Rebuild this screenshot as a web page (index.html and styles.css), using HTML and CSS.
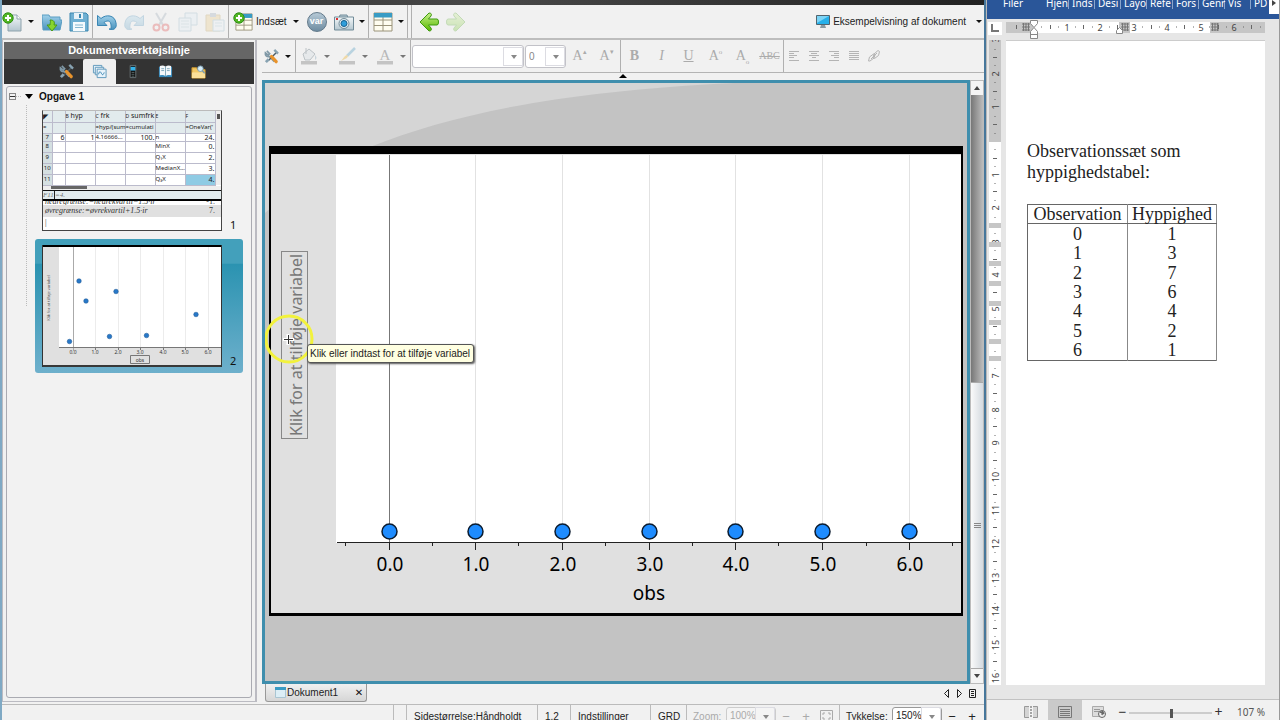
FILE: index.html
```html
<!DOCTYPE html>
<html lang="da">
<head>
<meta charset="utf-8">
<title>Dokument1</title>
<link rel="stylesheet" href="styles.css">
</head>
<body>
<svg class="defs" aria-hidden="true">
  <defs>
    <linearGradient id="gBlue" x1="0" y1="0" x2="0" y2="1"><stop offset="0" stop-color="#9fd0ea"/><stop offset="1" stop-color="#4a93bd"/></linearGradient>
    <linearGradient id="gGreen" x1="0" y1="0" x2="0" y2="1"><stop offset="0" stop-color="#c6f08a"/><stop offset="1" stop-color="#58b800"/></linearGradient>
    <linearGradient id="gGrey" x1="0" y1="0" x2="0" y2="1"><stop offset="0" stop-color="#f4f8fa"/><stop offset="1" stop-color="#b4c6cf"/></linearGradient>
  </defs>
  <symbol id="plus" viewBox="0 0 12 12"><circle cx="6" cy="6" r="5.2" fill="#52b623" stroke="#2e8d16"/><path d="M6 3v6M3 6h6" stroke="#fff" stroke-width="2"/></symbol>
  <symbol id="undo" viewBox="0 0 20 20"><path d="M0.500 3.500v10h9.500L7 10.500c4-3 8-2 7 6.500h-2c6 2 8-2 7-6C18 3 9 2 4 6.500z" fill="url(#gBlue)" stroke="#3a86b4"/></symbol>
  <symbol id="arrow" viewBox="0 0 20 20"><path d="M1 10 10 1c2 0 3 1 2 3L9.500 7H18q1.500 0 1.500 3T18 13H9.500l2.500 3c1 2 0 3-2 3z" fill="url(#gGreen)" stroke="#3f9a10"/></symbol>
  <symbol id="wrench" viewBox="0 0 16 16"><path d="M3 2l3 3-1.500 1.500L1.500 4C1 7 3 8.500 5.500 8L11 13.500" fill="none" stroke="#7f98a6" stroke-width="1.800"/><path d="M14 3l-9 9" stroke="#4e5d66" stroke-width="1.500"/><path d="M11 1l4 4" stroke="#88a3b2" stroke-width="2.500"/><path d="M8 8l5 5.500" stroke="#e8932c" stroke-width="3.500" stroke-linecap="round"/><path d="M5 11l-3 3" stroke="#88a3b2" stroke-width="3"/></symbol>
  <symbol id="table" viewBox="0 0 20 20"><path d="M1 1h18v18H1z" fill="#fffdf0" stroke="#9a937a"/><path d="M1 8h18M1 13.500h18M10 5v14" stroke="#9a937a"/><path d="M1 1h18v4.500H1z" fill="#389bc4"/></symbol>
</svg>

<div class="desktop">
<main class="app">
  <div class="titlebar"></div>

  <div class="toolbar">
    <button class="tool new menu" aria-label="Ny"><svg viewBox="0 0 20 20"><path d="M6 3h9l4 4v12H6z" fill="url(#gGrey)" stroke="#8fa3ad"/><path d="M15 3v4h4" fill="#fff" stroke="#8fa3ad"/><use href="#plus" x="0" y="0" width="12" height="12"/></svg></button>
    <button class="tool" aria-label="Åbn"><svg viewBox="0 0 20 20"><path d="M0 3h7l1 2h10v3h2l-2 10H1z" fill="url(#gBlue)" stroke="#5b9dc2"/><path d="M8 8c4 0 5 2 4 5h3l-5 6-5-6h3c0-2 1-3 0-5z" fill="#87d52f" stroke="#4a9a17"/></svg></button>
    <button class="tool" aria-label="Gem"><svg viewBox="0 0 20 20"><path d="M1 1h16l2 2v16H1z" fill="#6eafd2" stroke="#3b87b0"/><path d="M5 1h9v6H5z" fill="#e7f2f8"/><path d="M11 2v4" stroke="#3b87b0" stroke-width="2"/><path d="M4 10h12v9H4z" fill="#f4fafd"/><path d="M6 13h8M6 15.500h8" stroke="#86b7d0"/></svg></button>
    <span class="sep"></span>
    <button class="tool" aria-label="Fortryd"><svg><use href="#undo"/></svg></button>
    <button class="tool" aria-label="Annuller fortryd" disabled><svg class="flip"><use href="#undo"/></svg></button>
    <button class="tool" aria-label="Klip" disabled><svg viewBox="0 0 20 20"><path d="M5 1l7 12M15 1L8 13" stroke="#89a" stroke-width="2"/><circle cx="5.500" cy="15.500" r="3" fill="none" stroke="#d22" stroke-width="2"/><circle cx="14.500" cy="15.500" r="3" fill="none" stroke="#d22" stroke-width="2"/></svg></button>
    <button class="tool" aria-label="Kopier" disabled><svg viewBox="0 0 20 20"><path d="M7 1h12v12H7z" fill="#dcecf5" stroke="#7ba5bb"/><path d="M1 6h12v13H1z" fill="#dcecf5" stroke="#7ba5bb"/><path d="M3 9h8M3 12h8M3 15h8" stroke="#9bbccd"/></svg></button>
    <button class="tool" aria-label="Sæt ind" disabled><svg viewBox="0 0 20 20"><path d="M1 3h14v16H1z" fill="#e8c069" stroke="#b08b3c"/><path d="M5 1h6v4H5z" fill="#89a"/><path d="M8 8h11v11H8z" fill="#e6f0f6" stroke="#7ba5bb"/><path d="M10 11h7M10 14h7" stroke="#9bbccd"/></svg></button>
    <span class="sep"></span>
    <button class="tool insert menu"><svg viewBox="0 0 20 20"><use href="#table" x="2" y="1" width="18" height="18"/><use href="#plus" width="12" height="12"/></svg>Indsæt</button>
    <button class="tool var" aria-label="Variabler"><span>var</span></button>
    <button class="tool menu cam" aria-label="Kamera"><svg viewBox="0 0 20 20"><path d="M6 3h7l1 3H5z" fill="#b8cbd5" stroke="#718b98"/><path d="M0.500 5h19v13H0.500z" fill="url(#gGrey)" stroke="#718b98"/><circle cx="10" cy="11.500" r="5" fill="#dfeaf0" stroke="#718b98"/><circle cx="10" cy="11.500" r="3" fill="#2f9edb" stroke="#16608e"/><path d="M2 7h2" stroke="#d33" stroke-width="2"/></svg></button>
    <span class="sep"></span>
    <button class="tool menu cam" aria-label="Sidelayout"><svg viewBox="0 0 20 20"><use href="#table"/></svg></button>
    <span class="sep"></span><span class="sep second"></span>
    <button class="tool" aria-label="Tilbage"><svg><use href="#arrow"/></svg></button>
    <button class="tool" aria-label="Frem" disabled><svg class="flip"><use href="#arrow"/></svg></button>
    <span class="grow"></span>
    <button class="preview menu"><svg viewBox="0 0 14 14"><path d="M0.500 0.500h13v9H0.500z" fill="#26b0ea" stroke="#51646e"/><path d="M1 1h12L1 8z" fill="#7cd4f6"/><path d="M5 10h4l1 3H4z" fill="#8a9aa2"/></svg>Eksempelvisning af dokument</button>
  </div>

  <div class="work">
    <aside class="sidebar">
      <h2>Dokumentværktøjslinje</h2>
      <nav class="tabs">
        <button aria-label="Værktøjer"><svg><use href="#wrench"/></svg></button>
        <button class="active" aria-label="Sidesortering"><svg viewBox="0 0 16 16"><g fill="#e8f3fa" stroke="#5e97bb"><path d="M1.500 1.500h9v8h-9z"/><path d="M3.500 3.500h9v8h-9z"/><path d="M5.500 5.500h9.500v9H5.500z"/></g><path d="M7 11c1-4 2-3 3-1s2 2 3-1" fill="none" stroke="#2d7eae"/></svg></button>
        <button aria-label="Håndholdt"><svg viewBox="0 0 16 16"><path d="M5.500 1.500h6v13h-6z" fill="#111" stroke="#6b7478"/><path d="M6 3h5v4H6z" fill="#35b3ea"/><path d="M7 9h3M7 11h3M7 13h3" stroke="#566"/></svg></button>
        <button aria-label="Indhold"><svg viewBox="0 0 16 16"><path d="M1 3h14v11H1z" fill="#3487b8"/><path d="M2 2q4-1 6 1 2-2 6-1v10q-4-1-6 1-2-2-6-1z" fill="#f5f8fa"/><path d="M8 3v10M3.500 5h3M3.500 7h3M9.500 5h3M9.500 7h3" stroke="#7fa6ba"/></svg></button>
        <button aria-label="Stifinder"><svg viewBox="0 0 16 16"><path d="M1 4h5l1 2h8v9H1z" fill="#f2c866" stroke="#d09a2e"/><path d="M1 9h14v6H1z" fill="#fbe09a"/><circle cx="10" cy="5" r="3" fill="#d5ecf8" stroke="#7c9cad"/><path d="M12 7l2.500 3" stroke="#7c9cad" stroke-width="1.500"/></svg></button>
      </nav>
      <section class="tree">
        <div class="node"><button class="toggle" aria-label="Fold sammen"></button><span class="dash"></span><span class="down"></span><b>Opgave 1</b></div>
        <div class="branch">
          <div class="card">
            <div class="thumb">
              <table class="sheet">
                <colgroup><col class="c0"><col class="c1"><col class="c2"><col class="c3"><col class="c3"><col class="c3"><col class="c3"><col class="c6"></colgroup>
                <tr class="head"><th>◤</th><th></th><th><i>B</i> hyp</th><th><i>C</i> frk</th><th><i>D</i> sumfrk</th><th><i>E</i></th><th><i>F</i></th><th class="rail"><span></span></th></tr>
                <tr class="head formula"><th>=</th><th></th><th></th><th>=hyp/(sum</th><th>=cumulati</th><th></th><th>=OneVar('</th><th class="rail"></th></tr>
                <tr class="cut"><th>7</th><td>6</td><td>1</td><td class="l">4.16666...</td><td>100.</td><td class="l">n</td><td>24.</td><td class="rail"></td></tr>
                <tr><th>8</th><td></td><td></td><td></td><td></td><td class="l">MinX</td><td>0.</td><td class="rail"></td></tr>
                <tr><th>9</th><td></td><td></td><td></td><td></td><td class="l">Q₁X</td><td>2.</td><td class="rail"></td></tr>
                <tr><th>10</th><td></td><td></td><td></td><td></td><td class="l">MedianX...</td><td>3.</td><td class="rail"></td></tr>
                <tr><th>11</th><td></td><td></td><td></td><td></td><td class="l">Q₃X</td><td class="sel">4.</td><td class="rail"></td></tr>
              </table>
              <div class="hbar"><span></span></div>
              <div class="cellref"><span>F11</span>=4.</div>
              <div class="calc"><p class="old"><em>nedregrænse:=nedrekvartil−1.5·ir</em><span>-1.</span></p><p class="res"><em>øvregrænse:=øvrekvartil+1.5·ir</em><span>7.</span></p><p>|</p></div>
            </div>
            <span class="num">1</span>
          </div>
          <div class="card selected">
            <svg class="thumb2" viewBox="0 0 180 122" role="img" aria-label="Side 2">
              <path d="M0 0h180v122H0z" fill="#e0e0e0"/><path d="M17 2h162v100H17z" fill="#fff"/>
              <path d="M53.500 2v100M76.500 2v100M98.500 2v100M121.500 2v100M143.500 2v100M166.500 2v100" stroke="#ececec"/>
              <path d="M31.500 2v104" stroke="#aaa"/>
              <path d="M17 102.500h162M53.500 102v3M76.500 102v3M98.500 102v3M121.500 102v3M143.500 102v3M166.500 102v3" stroke="#777"/>
              <g fill="#2878c8" stroke="#1a5590" stroke-width="0.500"><circle cx="37" cy="36" r="2.300"/><circle cx="44" cy="56" r="2.300"/><circle cx="74" cy="46.500" r="2.300"/><circle cx="154" cy="69.500" r="2.300"/><circle cx="27.500" cy="96.500" r="2.300"/><circle cx="67.500" cy="91.500" r="2.300"/><circle cx="104.500" cy="90.500" r="2.300"/></g>
              <g class="tiny"><text x="31" y="109">0.0</text><text x="53" y="109">1.0</text><text x="76" y="109">2.0</text><text x="98" y="109">3.0</text><text x="121" y="109">4.0</text><text x="143" y="109">5.0</text><text x="166" y="109">6.0</text><text x="98" y="117">obs</text><text transform="translate(8 53) rotate(-90)" class="mini">Klik for at tilføje variabel</text></g>
              <path d="M88.500 110.500h19v8h-19z" fill="none" stroke="#777"/>
              <path d="M0 1h180" stroke="#000" stroke-width="2"/><path d="M0 121h180" stroke="#000" stroke-width="1.500"/><path d="M0.500 0v122M179.500 0v122" stroke="#333"/>
            </svg>
            <span class="num">2</span>
          </div>
        </div>
      </section>
    </aside>

    <section class="docarea">
      <div class="format">
        <button class="tool f1 menu" aria-label="Værktøjer"><svg><use href="#wrench"/></svg></button>
        <span class="sep"></span>
        <button class="tool f2 menu dim" aria-label="Fyldfarve"><svg viewBox="0 0 18 18"><path d="M3 7l6-5 6 5-5 6H5z" fill="#e6e9eb" stroke="#bcc2c6"/><path d="M6 1v6" stroke="#bcc2c6"/><path d="M15 8q3 3 0 5z" fill="#c9d5dc"/><path d="M1 14h16v3.500H1z" fill="#c4c4c4"/></svg></button>
        <button class="tool f2 menu dim" aria-label="Linjefarve"><svg viewBox="0 0 18 18"><path d="M17 1L9 9" stroke="#b9d3e0" stroke-width="2.500"/><path d="M9 8l-2 1-4 5 6-3 1-2z" fill="#efd9a8"/><path d="M1 14h16v3.500H1z" fill="#c4c4c4"/></svg></button>
        <button class="tool f2 menu dim" aria-label="Tekstfarve"><svg viewBox="0 0 18 18"><text x="9" y="13" class="ficon">A</text><path d="M1 14h16v3.500H1z" fill="#c4c4c4"/></svg></button>
        <span class="sep"></span>
        <span class="combo font"><select aria-label="Skrifttype" disabled><option></option></select></span>
        <span class="combo size"><select aria-label="Skriftstørrelse" disabled><option>0</option></select></span>
        <button class="txt" aria-label="Større">A<sup>▴</sup></button>
        <button class="txt" aria-label="Mindre">A<sup>▾</sup></button>
        <span class="sep"></span>
        <button class="txt"><b>B</b></button>
        <button class="txt"><i>I</i></button>
        <button class="txt"><u>U</u></button>
        <button class="txt">A<sup>o</sup></button>
        <button class="txt">A<sub>o</sub></button>
        <button class="txt abc"><s>ABC</s></button>
        <span class="sep"></span>
        <button class="al" aria-label="Venstre"><svg viewBox="0 0 12 12"><path d="M1 1.500h10M1 3.500h5M1 5.500h8M1 7.500h5M1 10.500h10" stroke="#b4b4b4"/></svg></button>
        <button class="al" aria-label="Centrer"><svg viewBox="0 0 12 12"><path d="M1 1.500h10M3 3.500h6M1 5.500h10M4 7.500h4M1 10.500h10" stroke="#b4b4b4"/></svg></button>
        <button class="al" aria-label="Højre"><svg viewBox="0 0 12 12"><path d="M1 1.500h10M6 3.500h5M3 5.500h8M6 7.500h5M1 10.500h10" stroke="#b4b4b4"/></svg></button>
        <button class="al" aria-label="Lige margener"><svg viewBox="0 0 12 12"><path d="M1 1.500h10M1 3.500h10M1 5.500h10M1 7.500h10M1 9.500h10" stroke="#b4b4b4"/></svg></button>
        <button class="al" aria-label="Link"><svg viewBox="0 0 12 12"><g fill="none" stroke="#b4b4b4"><path d="M0.500 11l1-4 4-3 1.500 1-1 3-4 3zM5 8l1-4 4-3.500 1.500 1-1 4-4 3zM3 9l6-6"/></g></svg></button>
      </div>
      <div class="fold"><span></span></div>

      <div class="view">
        <div class="canvas">
          <svg class="swoosh" viewBox="0 0 702 598" preserveAspectRatio="none" aria-hidden="true"><path d="M0 0H470C300 8 190 30 105 64Q45 90 0 130z" fill="#d5d5d5"/></svg>
          <div class="frame">
            <svg class="plot" viewBox="0 0 690 459" role="img" aria-label="Prikplot af obs">
              <path d="M0 0h690v459H0z" fill="#e0e0e0"/><path d="M65 1h625v388H65z" fill="#fff"/>
              <path d="M204.500 1v380M291.500 1v380M378.500 1v380M464.500 1v380M551.500 1v380M638.500 1v380" stroke="#e2e2e2"/>
              <path d="M118.500 1v395" stroke="#777"/>
              <path d="M66 388.500h624M118.500 388v8M204.500 388v8M291.500 388v8M378.500 388v8M464.500 388v8M551.500 388v8M638.500 388v8M74.500 388v4M161.500 388v4M247.500 388v4M334.500 388v4M421.500 388v4M507.500 388v4M595.500 388v4M681.500 388v4" stroke="#222"/>
              <g fill="#1e8cff" stroke="#0b1c30" stroke-width="1.500"><circle cx="118.500" cy="377.500" r="7.500"/><circle cx="204.500" cy="377.500" r="7.500"/><circle cx="291.500" cy="377.500" r="7.500"/><circle cx="378.500" cy="377.500" r="7.500"/><circle cx="464.500" cy="377.500" r="7.500"/><circle cx="551.500" cy="377.500" r="7.500"/><circle cx="638.500" cy="377.500" r="7.500"/></g>
              <g class="axis"><text x="119" y="417">0.0</text><text x="205" y="417">1.0</text><text x="292" y="417">2.0</text><text x="379" y="417">3.0</text><text x="465" y="417">4.0</text><text x="552" y="417">5.0</text><text x="639" y="417">6.0</text><text x="378" y="446">obs</text></g>
            </svg>
            <button class="ylabel">Klik for at tilføje variabel</button>
            <svg class="pointer" viewBox="0 0 50 50" aria-hidden="true"><circle cx="25" cy="25" r="23" fill="none" stroke="#f2f23c" stroke-width="3"/><path d="M24 20v11M19 25.500h11" stroke="#fff" stroke-width="3"/><path d="M24.500 21v9M20 25.500h9" stroke="#333"/></svg>
            <div class="tip" role="tooltip">Klik eller indtast for at tilføje variabel</div>
          </div>
        </div>
        <div class="scroll"><button class="up" aria-label="Op"></button><span class="track"></span><span class="grip"><i></i></span><button class="dn" aria-label="Ned"></button></div>
      </div>

      <div class="doctabs">
        <div class="doctab"><svg viewBox="0 0 11 11"><path d="M0.500 0.500h10v10H0.500z" fill="#dceef6" stroke="#a9c5d2"/><path d="M0 0h11v3H0z" fill="#389bc4"/></svg><span>Dokument1</span><button aria-label="Luk">✕</button></div>
        <div class="docnav"><button aria-label="Forrige"><svg viewBox="0 0 9 9"><path d="M6.500 0.500v8L2.500 4.500z" fill="none" stroke="#222"/></svg></button><button aria-label="Næste"><svg viewBox="0 0 9 9"><path d="M2.500 0.500v8l4-4z" fill="none" stroke="#222"/></svg></button><button aria-label="Liste"><svg viewBox="0 0 9 9"><path d="M1.500 0.500h6v8h-6zM3 2.500h3M3 4.500h3M3 6.500h3" fill="none" stroke="#222"/></svg></button></div>
      </div>
    </section>
  </div>

  <footer class="status">
    <span class="s0"></span><span class="s1">Sidestørrelse:Håndholdt</span><span class="s2">1.2</span><span class="s3">Indstillinger</span><span class="s4">GRD</span>
    <label class="off" for="zoom">Zoom:</label><span class="combo pct off"><select id="zoom" disabled><option>100%</option></select></span><button class="pm off">−</button><button class="pm off">+</button><button class="pm off" aria-label="Tilpas"><svg viewBox="0 0 13 11"><path d="M0.500 0.500h12v10H0.500zM3 5V3h2M8 3h2v2M10 7v2H8M5 9H3V7" fill="none" stroke="#aaa"/></svg></button>
    <label class="thick" for="thick">Tykkelse:</label><span class="combo pct"><select id="thick"><option>150%</option></select></span><button class="pm">−</button><button class="pm">+</button>
  </footer>
</main>

<section class="word">
  <nav class="ribbon">
    <button class="file">Filer</button><button>Hjen</button><button>Inds</button><button>Desi</button><button>Layo</button><button>Refe</button><button>Fors</button><button>Genr</button><button>Vis</button><button class="pdf">PD</button><button class="more" aria-label="Mere"></button>
  </nav>
  <div class="hrow"><span class="tabstop"></span><svg class="hruler" aria-hidden="true"></svg></div>
  <div class="pagerow">
    <svg class="vruler" aria-hidden="true"></svg>
    <article class="page">
      <p>Observationssæt som hyppighedstabel:</p>
      <table>
        <thead><tr><th>Observation</th><th>Hyppighed</th></tr></thead>
        <tbody><tr><td>0</td><td>1</td></tr><tr><td>1</td><td>3</td></tr><tr><td>2</td><td>7</td></tr><tr><td>3</td><td>6</td></tr><tr><td>4</td><td>4</td></tr><tr><td>5</td><td>2</td></tr><tr><td>6</td><td>1</td></tr></tbody>
      </table>
    </article>
  </div>
  <footer class="wstatus">
    <button aria-label="Læsetilstand"><svg viewBox="0 0 14 12"><path d="M0.500 0.500h13v11H0.500z" fill="#d4d4d4" stroke="#999"/><path d="M5 0h4v12H5z" fill="#f4f4f4"/><path d="M7 0v12" stroke="#555" stroke-dasharray="2 1"/></svg></button>
    <button class="on" aria-label="Udskriftslayout"><svg viewBox="0 0 14 12"><path d="M0.500 0.500h13v11H0.500zM2 3.500h10M2 5.500h10M2 7.500h10M2 9.500h10" fill="none" stroke="#777"/></svg></button>
    <button aria-label="Weblayout"><svg viewBox="0 0 14 12"><path d="M0.500 0.500h11v10H0.500z" fill="#ddd" stroke="#aaa"/><path d="M2 3.500h6M2 5.500h5" stroke="#999"/><circle cx="10" cy="8" r="3.500" fill="#eee" stroke="#666"/><path d="M8 6q3 0 2 3M10 5l2 3" stroke="#666" stroke-width="1.500" fill="none"/></svg></button>
    <button class="z">−</button><input type="range" min="0" max="100" value="51" aria-label="Zoom"><button class="z">+</button><span class="zoomval">107 %</span>
  </footer>
</section>
</div>
<script src="rulers.js"></script>
</body>
</html>
```
FILE: rulers.js
```js
const STEP = 134 / 4;
const NS = "http://www.w3.org/2000/svg";

function add(svg, name, attrs, text) {
  const el = document.createElementNS(NS, name);
  for (const key in attrs) el.setAttribute(key, attrs[key]);
  if (text !== undefined) el.textContent = text;
  svg.appendChild(el);
}

function band(svg, vertical, start, length, size, fill) {
  add(svg, "rect", vertical
    ? { x: 0, y: start, width: size, height: length, fill }
    : { x: start, y: 0, width: length, height: size, fill });
}

function marks(svg, vertical, zero, from, to, mid) {
  for (let q = from * 4; q <= to * 4; q++) {
    const p = Math.round(zero + q * STEP / 4 + q * 0.02);
    const n = Math.abs(q / 4);
    if (q === 0 || (vertical && n === 6)) continue;
    if (q % 4 === 0) {
      const at = vertical ? `translate(${mid + 4} ${p}) rotate(-90)` : `translate(${p} ${mid + 4})`;
      add(svg, "text", { transform: at }, n);
    } else {
      const len = q % 2 === 0 ? 4 : 1;
      const d = vertical ? `M${mid - len / 2} ${p + 0.5}h${len}` : `M${p + 0.5} ${mid - len / 2}v${len}`;
      add(svg, "path", { d, stroke: "#666" });
    }
  }
}

const h = document.querySelector(".hruler");
band(h, false, 0, 259, 11, "#c6c6c6");
band(h, false, 27, 86, 11, "#fff");
band(h, false, 124, 80, 11, "#fff");
marks(h, false, 27, -0.5, 6.75, 5);
for (const x of [16, 115, 205]) {
  add(h, "path", { d: `M${x} 2h8M${x} 5h8M${x} 8h8M${x + 1.5} 1v8M${x + 4} 1v8M${x + 6.5} 1v8`, stroke: "#777" });
}
add(h, "path", { d: "M24.500 -1.500h7v3l-3.500 4 3.500 4v7h-7v-7l3.500-4-3.500-4zM24.500 12.500h7", fill: "#fff", stroke: "#888" });
add(h, "path", { d: "M110.500 11.500v-3l3-3 3 3v3z", fill: "#fff", stroke: "#888" });

const v = document.querySelector(".vruler");
band(v, true, 0, 2000, 12, "#fff");
band(v, true, 0, 102, 12, "#c6c6c6");
marks(v, true, 101, -3, 16, 6);
for (const y of [183, 202, 221, 241, 261, 280, 299, 316]) band(v, true, y, 5, 12, "#c6c6c6");
```
FILE: styles.css
```css
* { box-sizing: border-box; }
html, body { margin: 0; height: 100%; overflow: hidden; }
body { font-family: "Liberation Sans", Arial, sans-serif; font-size: 10px; color: #222; }
button { border: 0; padding: 0; margin: 0; background: none; font: inherit; color: inherit; }
p, h2 { margin: 0; }
.defs { position: absolute; width: 0; height: 0; }

.desktop { display: grid; grid-template-columns: 986fr 294fr; height: 100vh; }
.app { display: flex; flex-direction: column; min-width: 0; min-height: 0; background: #f1f1f1; border-left: 2px solid #7fa9c4; border-right: 2px solid #47779b; overflow: hidden; }
.titlebar { height: 5px; flex: none; background: linear-gradient(90deg, #2a2a2a, #484848 50%, #222); }

/* Main toolbar */
.toolbar { display: flex; align-items: center; height: 35px; flex: none; border-bottom: 2px solid #bdbdbd; }
.sep { width: 1px; align-self: stretch; background: #b0b0b0; flex: none; }
.second { margin: 0 3px; }
.grow { flex: 1; }
.tool { width: 27px; height: 24px; display: flex; align-items: center; justify-content: center; flex: none; }
.tool svg { width: 20px; height: 20px; flex: none; }
.tool:disabled { opacity: 0.25; }
.flip { transform: scaleX(-1); }
.menu::after { content: ""; border: 3px solid transparent; border-top: 3px solid #111; border-bottom: 0; margin-left: 6px; flex: none; }
.new { width: 36px; justify-content: flex-start; }
.insert { width: 74px; padding-left: 4px; justify-content: flex-start; gap: 3px; }
.insert::after { margin-left: 3px; }
.var span { width: 20px; height: 20px; border-radius: 50%; border: 1px solid #62798a; background: linear-gradient(#b6c9d6, #6e8ca1); color: #fff; font-weight: bold; font-size: 9px; line-height: 17px; text-align: center; }
.cam { width: 38px; }
.cam::after { margin-left: 5px; }
.preview { display: flex; align-items: center; gap: 3px; padding-right: 2px; }
.preview::after { margin-left: 7px; }
.preview svg { width: 14px; height: 14px; }

.work { display: grid; grid-template-columns: 260px minmax(0, 1fr); flex: 1; min-height: 0; }

/* Sidebar */
.sidebar { display: flex; flex-direction: column; margin: 0 5px 2px 0; padding: 2px 1px 0 1px; border: 1px solid #bbbbc2; border-top: 0; border-right-width: 2px; }
.sidebar h2 { background: #666; color: #fff; font-size: 11px; line-height: 17px; height: 17px; text-align: center; }
.tabs { display: flex; justify-content: center; height: 25px; padding-left: 6px; background: #333; }
.tabs button { width: 33px; display: flex; align-items: center; justify-content: center; }
.tabs svg { width: 15px; height: 15px; }
.tabs .active { background: #efefef; border-radius: 2px 2px 0 0; }
.tree { flex: 1; margin: 2px 2px 3px 2px; border: 1px solid #aaabb2; border-radius: 3px; background: #f2f2f2; }
.node { display: flex; align-items: center; height: 18px; padding-left: 2px; color: #111; }
.toggle { width: 7px; height: 7px; border: 1px solid #888; display: flex; align-items: center; }
.toggle::before { content: ""; width: 5px; height: 1px; background: #333; }
.dash { width: 5px; border-top: 1px dotted #bbb; }
.down { border: 4px solid transparent; border-top: 5px solid #000; border-bottom: 0; margin: 0 6px 0 4px; }
.branch { margin-left: 19px; border-left: 1px dotted #bbb; height: 201px; }
.card { display: flex; align-items: flex-end; gap: 8px; height: 134px; width: 208px; margin-left: 8px; padding: 6px 7px; border-radius: 3px; }
.card:first-child { padding-bottom: 8px; }
.selected { background: linear-gradient(#43a0bb 0, #43a0bb 18%, #2b93b1 19%, #6eb0cc); }
.num { font-family: "Noto Sans", sans-serif; font-size: 11px; line-height: 13px; color: #111; }
.thumb { width: 180px; height: 121px; overflow: hidden; border: 1px solid #444; border-top-color: #bbb; background: #fff; font-family: "Noto Sans", sans-serif; flex: none; }
.sheet { width: 178px; table-layout: fixed; border-collapse: collapse; font-size: 7px; line-height: 9px; color: #222; }
.sheet td, .sheet th { padding: 0; height: 11px; border-right: 1px solid #bbc; border-bottom: 1px solid #bbc; white-space: nowrap; text-align: right; font-weight: normal; }
.sheet th { background: #d5e0e2; text-align: center; font-size: 6px; }
.sheet .head th { background: #e2ebed; text-align: left; font-size: 7px; }
.sheet .formula th { font-size: 6px; }
.sheet th i { font-size: 5px; font-style: normal; }
.sheet .cut td, .sheet .cut th { height: 8px; line-height: 7px; }
.sheet td.l { text-align: left; font-size: 6px; }
.sheet .sel { background: #8fcbe4; }
.sheet .rail, .sheet .head .rail { background: #eee; border: 0; }
.rail span { display: block; width: 3px; height: 5px; margin-left: 1px; background: #555; }
.c0 { width: 9px; } .c1 { width: 13px; } .c2 { width: 30px; } .c3 { width: 30px; } .c6 { width: 6px; }
.hbar { height: 4px; background: #eee; padding-left: 8px; }
.hbar span { display: block; width: 36px; height: 3px; background: #666; }
.cellref { height: 11px; border-top: 1px solid #111; border-bottom: 2px solid #000; background: #e2ebed; font: italic 7px/8px "Liberation Serif", serif; color: #777; }
.cellref span { display: inline-block; width: 12px; border-right: 1px solid #222; }
.calc { font: 8px/12px "Liberation Serif", serif; color: #333; }
.calc p { display: flex; justify-content: space-between; padding: 0 6px 0 2px; height: 12px; }
.calc .old { height: 4px; line-height: 1px; overflow: hidden; }
.calc .res { background: #e0e0e0; }
.thumb2 { width: 180px; height: 122px; flex: none; }
.tiny { font: 5px "Noto Sans", sans-serif; text-anchor: middle; fill: #333; }
.mini { font-size: 4px; fill: #555; }

/* Formatting bar */
.docarea { display: flex; flex-direction: column; min-width: 0; min-height: 0; }
.format { display: flex; align-items: center; height: 33px; flex: none; border-bottom: 1px solid #b4b4b4; }
.format .sep { height: 32px; }
.f1 { width: 33px; padding-right: 3px; } .f1 svg { width: 15px; height: 15px; }
.f2 { width: 38px; } .f2 svg { width: 18px; height: 18px; }
.dim::after { border-top-color: #777; }
.ficon { font: 15px "Liberation Serif", serif; fill: #b8b8b8; text-anchor: middle; }
.combo { display: flex; position: relative; }
.combo select { appearance: none; width: 100%; height: 23px; margin: 0; padding: 0 3px; border: 1px solid #c2c2c8; border-radius: 3px; background: #fff; color: #888; opacity: 1; font: inherit; }
.combo::after { content: ""; position: absolute; right: 7px; top: 10px; border: 3px solid transparent; border-top: 4px solid #888; border-bottom: 0; }
.combo::before { content: ""; position: absolute; right: 1px; top: 2px; bottom: 2px; width: 18px; border: 1px solid #dcdce2; }
.font { width: 112px; margin: 0 1px 0 1px; }
.size { width: 41px; }
.txt { width: 27px; height: 24px; font: 14px/24px "Liberation Serif", serif; color: #ababab; flex: none; }
.txt sup, .txt sub { font-size: 7px; line-height: 1px; }
.abc { font-size: 10px; }
.al { width: 20px; height: 20px; display: flex; align-items: center; justify-content: center; flex: none; }
.al svg { width: 12px; height: 12px; }
.fold { height: 7px; flex: none; display: flex; justify-content: center; align-items: flex-end; }
.fold span { border: 4px solid transparent; border-bottom: 4px solid #000; border-top: 0; margin-bottom: 2px; }

/* Document canvas */
.view { display: flex; flex: 1; min-height: 0; }
.canvas { position: relative; flex: 1; min-width: 0; border: 3px solid #3f8ead; background: #c3c3c3; overflow: hidden; padding: 63px 4px 0 4px; }
.swoosh { position: absolute; inset: 0; width: 100%; height: 100%; }
.frame { position: relative; border: 2px solid #000; border-top-width: 8px; border-bottom-width: 3px; }
.plot { display: block; width: 100%; height: auto; }
.axis { font: 19px "Noto Sans", sans-serif; text-anchor: middle; fill: #000; }
.ylabel { position: absolute; left: 10px; top: 97px; width: 27px; height: 188px; border: 1px solid #888; writing-mode: vertical-rl; transform: rotate(180deg); font: 16px/28px "Noto Sans", sans-serif; color: #777; text-align: center; white-space: nowrap; }
.pointer { position: absolute; left: -7px; top: 160px; width: 50px; height: 50px; }
.tip { position: absolute; left: 36px; top: 190px; padding: 0 3px 0 2px; line-height: 17px; background: #ffffe1; border: 1px solid #555; border-radius: 3px; box-shadow: 1px 1px 2px #555; color: #222; white-space: nowrap; }

.scroll { width: 14px; display: flex; flex-direction: column; background: #f4f4f4; border: 1px solid #bbb; }
.scroll button { height: 14px; display: flex; align-items: center; justify-content: center; }
.up::before, .dn::before { content: ""; border: 3px solid transparent; border-bottom: 4px solid #444; border-top: 0; }
.dn::before { transform: rotate(180deg); }
.track { flex: 288; background: linear-gradient(90deg, #777, #bcbcbc); }
.grip { flex: 286; display: flex; align-items: center; justify-content: center; background: linear-gradient(90deg, #fafafa, #d4dae0); border-top: 1px solid #aaa; border-bottom: 1px solid #aaa; }
.grip i { width: 7px; height: 5px; border-top: 1px solid #888; border-bottom: 1px solid #888; background: linear-gradient(transparent 1px, #888 1px, #888 2px, transparent 2px); }

.doctabs { display: flex; justify-content: space-between; align-items: flex-start; height: 20px; flex: none; padding-left: 3px; }
.doctab { display: flex; align-items: center; width: 102px; height: 18px; padding: 0 1px 0 9px; gap: 1px; background: linear-gradient(#f0f0f0, #d6d6d6); border: 1px solid #999; border-top: 0; border-radius: 0 0 3px 3px; }
.doctab svg { width: 11px; height: 11px; }
.doctab span { flex: 1; }
.doctab button { width: 12px; font: bold 10px "DejaVu Sans", sans-serif; color: #111; }
.docnav { display: flex; gap: 4px; padding: 5px 7px 0 0; }
.docnav button { width: 9px; height: 9px; display: flex; }

/* Status bar */
.status { display: flex; height: 16px; flex: none; overflow: hidden; border-top: 1px solid #bbb; line-height: 24px; white-space: nowrap; padding-right: 2px; }
.status > span:not(.combo) { border-left: 1px solid #bbb; padding-left: 7px; }
.status .s0 { flex: none; width: 13px; margin-left: auto; }
.s1 { width: 131px; } .s2 { width: 33px; } .s3 { width: 80px; } .s4 { width: 36px; }
.status label { width: 40px; border-left: 1px solid #bbb; padding-left: 6px; }
.status .thick { width: 53px; margin-left: 3px; }
.off, .off select { color: #aaa; }
.status .pct { width: 50px; height: 20px; }
.status .pct select { height: 20px; margin-top: 2px; color: #222; border-color: #999; line-height: 14px; padding-bottom: 2px; }
.status .off select { color: #aaa; background: #f4f4f4; border-color: #ccc; }
.pm { width: 20px; font-size: 13px; }
.pm svg { width: 13px; height: 11px; }

/* Word processor */
.word { display: flex; flex-direction: column; min-width: 0; min-height: 0; background: #e6e6e6; border-left: 1px solid #b8b8b8; border-right: 1px solid #999; overflow: hidden; }
.ribbon { display: flex; flex: none; align-items: flex-start; height: 19px; overflow: hidden; background: #2a5699; color: #fff; font: 10px/6px "Noto Sans", sans-serif; }
.ribbon button { width: 26px; height: 9px; padding: 0 0 3px 3px; border-right: 1px solid #8aa5cc; text-align: left; flex: none; }
.ribbon .file { width: 56px; padding-left: 16px; border: 0; }
.ribbon .pdf { flex: 1; min-width: 0; border: 0; padding-left: 3px; }
.ribbon .more { display: flex; align-items: center; justify-content: center; width: 10px; height: 14px; padding: 0 0 8px 0; background: #fff; border: 0; }
.more::before { content: ""; border: 3px solid transparent; border-left: 4px solid #444; border-right: 0; }
.hrow { display: flex; height: 21px; flex: none; padding: 3px 0 0 1px; gap: 4px; }
.tabstop { width: 14px; height: 13px; background: #fff; display: flex; align-items: flex-end; justify-content: center; padding: 3px; }
.tabstop::before { content: ""; width: 6px; height: 6px; border-left: 2px solid #777; border-bottom: 2px solid #777; }
.hruler { width: 259px; height: 11px; overflow: visible; flex: none; }
.hruler text, .vruler text { font: 9px "Noto Sans", sans-serif; fill: #444; text-anchor: middle; }
.pagerow { display: flex; flex: 1; min-height: 0; padding: 0 14px 14px 2px; gap: 5px; }
.vruler { width: 12px; height: 100%; flex: none; }
.page { flex: 1; background: #fff; border-top: 1px solid #ccc; padding: 100px 40px 0 21px; font: 18px/21px "Liberation Serif", serif; color: #222; }
.page table { margin-top: 21px; width: 190px; height: 157px; border-collapse: collapse; table-layout: fixed; line-height: 18px; border: 1px solid #666; }
.page th, .page td { padding: 0; font-weight: normal; text-align: center; border-right: 1px solid #888; }
.page th { border-bottom: 1px solid #666; }
.page th:first-child { width: 100px; }
.wstatus { display: flex; align-items: flex-start; height: 21px; flex: none; overflow: hidden; border-top: 1px solid #c2c2c2; background: #f1f1f1; padding-left: 27px; line-height: 24px; font-family: "Noto Sans", sans-serif; }
.wstatus button { width: 34px; height: 24px; display: flex; align-items: center; justify-content: center; flex: none; }
.wstatus svg { width: 14px; height: 12px; }
.wstatus .on { background: #cacaca; }
.wstatus .z { width: 13px; font-size: 14px; color: #333; }
.wstatus input { appearance: none; flex: 1; min-width: 20px; max-width: 83px; height: 2px; margin: 12px 0 0 0; background: #ccc; }
.wstatus input::-webkit-slider-thumb { appearance: none; width: 3px; height: 9px; background: #555; }
.zoomval { margin-left: 12px; color: #555; }
```
